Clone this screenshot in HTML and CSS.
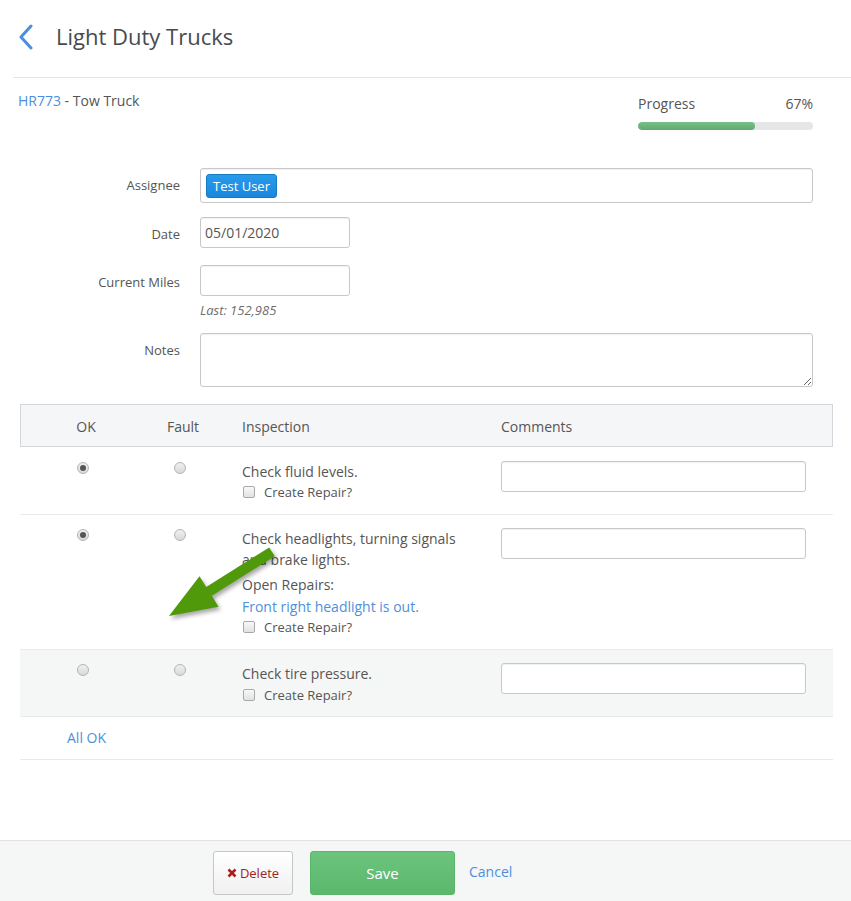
FILE: index.html
```html
<!DOCTYPE HTML>
<html>
<head>
  <meta charset="UTF-8">
  <title>Light Duty Trucks</title>
  <link rel="stylesheet" href="styles.css">
</head>
<body>
  <div class="page">
    <div class="header">
      <a class="back" href="#">
        <svg width="16" height="26" viewBox="0 0 16 26"><path d="M13 2 L3 13 L13 24" fill="none" stroke="#4a8fe0" stroke-width="3" stroke-linecap="round" stroke-linejoin="round"/></svg>
      </a>
      <h1>Light Duty Trucks</h1>
    </div>

    <div class="summary">
      <div class="unit"><a href="#">HR773</a> - Tow Truck</div>
      <div class="progress">
        <div class="progress-label"><span>Progress</span><span>67%</span></div>
        <div class="progress-track"><div class="progress-fill" style="width: 67%"></div></div>
      </div>
    </div>

    <div class="form">
      <div class="form-row row-assignee">
        <label>Assignee</label>
        <div class="field tag-field"><span class="tag">Test User</span></div>
      </div>
      <div class="form-row row-date">
        <label>Date</label>
        <input type="text" class="field short" value="05/01/2020">
      </div>
      <div class="form-row row-miles">
        <label>Current Miles</label>
        <div>
          <input type="text" class="field short">
          <div class="hint">Last: 152,985</div>
        </div>
      </div>
      <div class="form-row row-notes">
        <label>Notes</label>
        <textarea class="field notes"></textarea>
      </div>
    </div>

    <div class="checklist">
      <div class="check-head">
        <div class="c-ok">OK</div>
        <div class="c-fault">Fault</div>
        <div class="c-text">Inspection</div>
        <div class="c-comment">Comments</div>
      </div>

      <div class="check-row">
        <div class="c-ok"><input type="radio" name="r1" checked></div>
        <div class="c-fault"><input type="radio" name="r1"></div>
        <div class="c-text">
          <div>Check fluid levels.</div>
          <label class="repair"><input type="checkbox"> Create Repair?</label>
        </div>
        <div class="c-comment"><input type="text" class="field comment"></div>
      </div>

      <div class="check-row tall">
        <div class="c-ok"><input type="radio" name="r2" checked></div>
        <div class="c-fault"><input type="radio" name="r2"></div>
        <div class="c-text">
          <div>Check headlights, turning signals and brake lights.</div>
          <div class="open-title">Open Repairs:</div>
          <a class="open-link" href="#">Front right headlight is out.</a>
          <label class="repair"><input type="checkbox"> Create Repair?</label>
        </div>
        <div class="c-comment"><input type="text" class="field comment"></div>
      </div>

      <div class="check-row striped">
        <div class="c-ok"><input type="radio" name="r3"></div>
        <div class="c-fault"><input type="radio" name="r3"></div>
        <div class="c-text">
          <div>Check tire pressure.</div>
          <label class="repair"><input type="checkbox"> Create Repair?</label>
        </div>
        <div class="c-comment"><input type="text" class="field comment"></div>
      </div>

      <div class="all-ok"><a href="#">All OK</a></div>
    </div>

    <svg class="arrow" width="130" height="95" viewBox="0 0 130 95">
      <polygon points="9,81 39.5,41.2 46.2,52 109.2,12.4 114.8,21.2 51.8,60.8 58.5,71.7" fill="#4f990b"/>
    </svg>
  </div>

  <div class="footer">
    <button class="btn btn-delete">
      <svg width="10" height="10" viewBox="0 0 10 10"><path d="M1.5 1.5 L8.5 8.5 M8.5 1.5 L1.5 8.5" stroke="#a3201c" stroke-width="2.6"/></svg>
      Delete
    </button>
    <button class="btn btn-save">Save</button>
    <a class="cancel" href="#">Cancel</a>
  </div>
</body>
</html>
```

FILE: styles.css
```css
body {
  margin: 0;
  height: 901px;
  display: flex;
  flex-direction: column;
  font-family: 'Open Sans', Arial, Helvetica, sans-serif;
  font-size: 14px;
  color: #555;
  background-color: #ffffff;
}
a {
  color: #4d8fdc;
  text-decoration: none;
}
.page {
  flex: 1;
  position: relative;
}
.header {
  display: flex;
  align-items: center;
  height: 77px;
  margin-left: 13px;
  border-bottom: 1px solid #e4e4e4;
}
.back {
  display: flex;
  margin-left: 5px;
  margin-top: -3px;
}
.header h1 {
  margin: -5px 0 0 22px;
  font-size: 22px;
  font-weight: normal;
  color: #474b50;
}
.summary {
  display: flex;
  justify-content: space-between;
  padding: 13px 38px 0 18px;
  height: 77px;
}
.unit {
  line-height: 20px;
}
.progress {
  width: 175px;
  padding-top: 3px;
}
.progress-label {
  display: flex;
  justify-content: space-between;
  line-height: 20px;
}
.progress-track {
  margin-top: 8px;
  height: 8px;
  border-radius: 4px;
  background-color: #e6e6e6;
  overflow: hidden;
}
.progress-fill {
  height: 100%;
  border-radius: 4px;
  background: linear-gradient(#78c088, #62a971);
}
.form-row {
  display: grid;
  grid-template-columns: 180px 1fr;
  column-gap: 20px;
  padding-right: 38px;
  align-items: start;
}
.form-row label {
  text-align: right;
  font-size: 13px;
  line-height: 20px;
  padding-top: 7px;
}
.row-assignee {
  margin-bottom: 14px;
}
.row-date {
  margin-bottom: 17px;
}
.row-miles {
  margin-bottom: 13px;
}
.field {
  box-sizing: border-box;
  border: 1px solid #c8c8c8;
  border-radius: 3px;
  box-shadow: inset 0 1px 1px rgba(0, 0, 0, 0.06);
  font-family: 'Open Sans', Arial, Helvetica, sans-serif;
  font-size: 14px;
  color: #555;
  background-color: #fff;
  margin: 0;
}
.tag-field {
  height: 35px;
  padding: 5px;
}
.tag {
  display: inline-block;
  height: 24px;
  line-height: 22px;
  box-sizing: border-box;
  padding: 0 6px;
  background: linear-gradient(#2a9bea, #1788de);
  border: 1px solid #1679c4;
  border-radius: 3px;
  color: #fff;
  font-size: 13px;
}
.short {
  width: 150px;
  height: 31px;
  padding: 0 4px;
}
.hint {
  margin-top: 4px;
  font-size: 13px;
  font-style: italic;
  color: #6e6e6e;
  line-height: 20px;
}
.notes {
  width: 100%;
  height: 54px;
  display: block;
  resize: vertical;
}
.checklist {
  margin: 17px 18px 0 20px;
}
.check-head, .check-row {
  display: grid;
  grid-template-columns: 130px 64px 287px 1fr;
}
.check-head {
  height: 43px;
  box-sizing: border-box;
  align-items: center;
  background-color: #f5f6f7;
  border: 1px solid #d3d7dc;
}
.check-head > div {
  margin-top: 1px;
}
.c-ok, .c-fault {
  text-align: center;
}
.c-text {
  padding: 0 31px 0 28px;
  line-height: 21px;
}
.c-comment {
  padding: 0 27px 0 0;
}
.check-head .c-text, .check-head .c-comment {
  margin-left: -1px;
}
.check-row {
  padding: 14px 0 11px;
  border-bottom: 1px solid #e8eaec;
}
.check-row.tall {
  padding-bottom: 11px;
  padding-top: 13px;
}
.check-row.striped {
  background-color: #f5f6f6;
  padding: 13px 0 10px;
}
.check-row.striped .repair {
  margin-top: 1px;
}
.check-row .c-ok, .check-row .c-fault {
  padding-right: 4px;
}
input[type="radio"] {
  appearance: none;
  -webkit-appearance: none;
  width: 12px;
  height: 12px;
  margin: 1px 0 0;
  border: 1px solid #b4b4b4;
  border-radius: 50%;
  background: linear-gradient(#f0f0f0, #d9d9d9);
  position: relative;
  vertical-align: top;
}
input[type="radio"]:checked::after {
  content: "";
  position: absolute;
  left: 2px;
  top: 2px;
  width: 6px;
  height: 6px;
  border-radius: 50%;
  background-color: #555;
}
.repair {
  display: flex;
  align-items: center;
  font-size: 13px;
  color: #555;
}
input[type="checkbox"] {
  appearance: none;
  -webkit-appearance: none;
  width: 12px;
  height: 12px;
  margin: -2px 9px 0 1px;
  border: 1px solid #a9a9a9;
  border-radius: 2px;
  background: linear-gradient(#f8f8f8, #e2e2e2);
}
.open-title {
  margin-top: 4px;
}
.open-link {
  display: block;
  margin-top: 1px;
}
.comment {
  width: 100%;
  height: 31px;
  display: block;
}
.all-ok {
  height: 42px;
  line-height: 42px;
  padding-left: 47px;
  border-bottom: 1px solid #e8eaec;
}
.arrow {
  position: absolute;
  left: 160px;
  top: 535px;
  filter: drop-shadow(2px 3px 2px rgba(0, 0, 0, 0.35));
}
.footer {
  border-top: 1px solid #e2e2e2;
  background-color: #f5f6f6;
  display: flex;
  align-items: flex-start;
  padding: 10px 0 0 213px;
  box-sizing: border-box;
  height: 61px;
}
.btn {
  font-family: 'Open Sans', Arial, Helvetica, sans-serif;
  border-radius: 3px;
  cursor: pointer;
  height: 44px;
}
.btn-delete {
  width: 80px;
  font-size: 13px;
  color: #a3201c;
  background: linear-gradient(#ffffff, #f0f0f0);
  border: 1px solid #c6c6c6;
  display: flex;
  align-items: center;
  justify-content: center;
  gap: 3px;
}
.btn-save {
  width: 145px;
  margin-left: 17px;
  font-size: 15px;
  color: #fff;
  background: linear-gradient(#6cc47d, #5bb86d);
  border: 1px solid #59b56a;
}
.cancel {
  margin-left: 14px;
  line-height: 42px;
}
```
